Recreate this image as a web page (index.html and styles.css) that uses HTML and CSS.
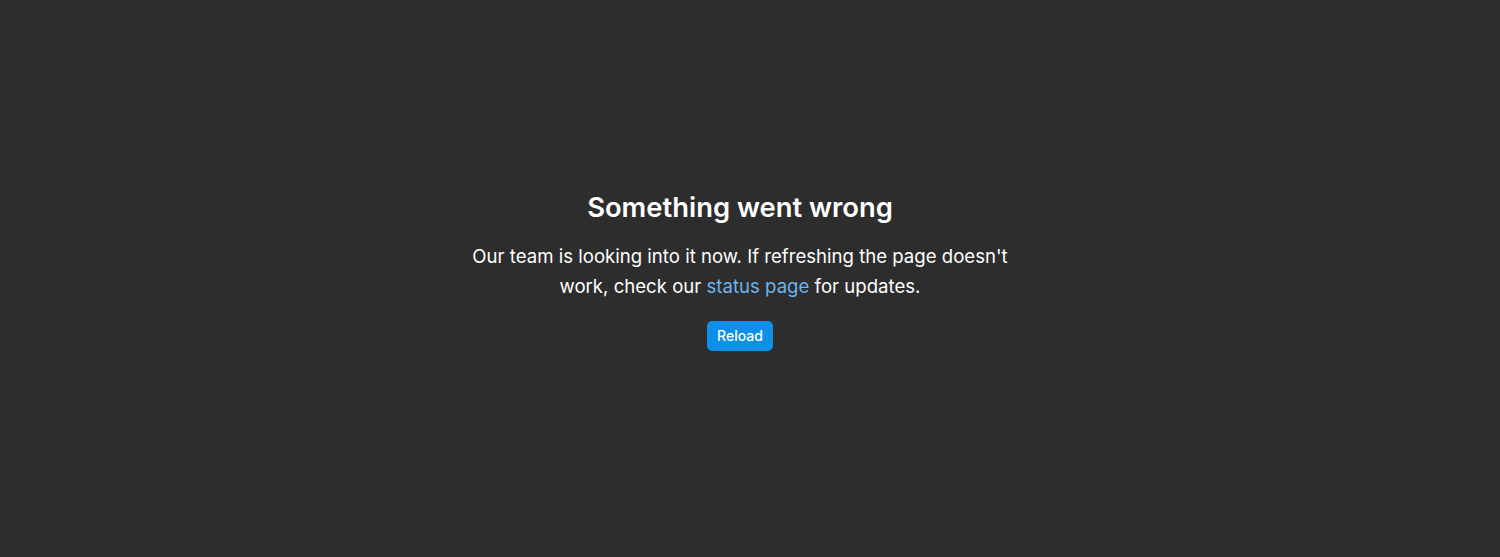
FILE: index.html
```html
<!DOCTYPE html>
<html lang="en">
<head>
<meta charset="utf-8">
<title>Something went wrong</title>
<link rel="stylesheet" href="styles.css">
</head>
<body>
<main class="page">
  <div class="error">
    <h1 class="error-title">Something went wrong</h1>
    <p class="error-text">Our team is looking into it now. If refreshing the page doesn't work, check our <a class="error-link" href="#">status page</a> for updates.</p>
    <button class="btn-reload" type="button">Reload</button>
  </div>
</main>
</body>
</html>
```

FILE: styles.css
```css
html, body {
  margin: 0;
  padding: 0;
  background: #2d2d2d;
}
body {
  font-family: Inter, "Noto Sans", sans-serif;
  color: #ffffff;
}
.page {
  min-height: 557px;
  box-sizing: border-box;
  display: flex;
  align-items: center;
  justify-content: center;
  padding: 0 20px 17px 0;
}
.error {
  display: flex;
  flex-direction: column;
  align-items: center;
  text-align: center;
  max-width: 560px;
}
.error-title {
  margin: 0 0 17px;
  font-size: 27.4px;
  font-weight: 600;
  line-height: 34px;
}
.error-text {
  margin: 0 0 20px;
  font-size: 18.6px;
  line-height: 30px;
}
.error-link {
  color: #6bb4ee;
  text-decoration: none;
}
.btn-reload {
  font-family: Inter, "Noto Sans", sans-serif;
  font-size: 14px;
  font-weight: 500;
  color: #ffffff;
  background: #0d8fea;
  border: none;
  border-radius: 5px;
  height: 30px;
  padding: 0 10.5px;
  cursor: pointer;
}
```
